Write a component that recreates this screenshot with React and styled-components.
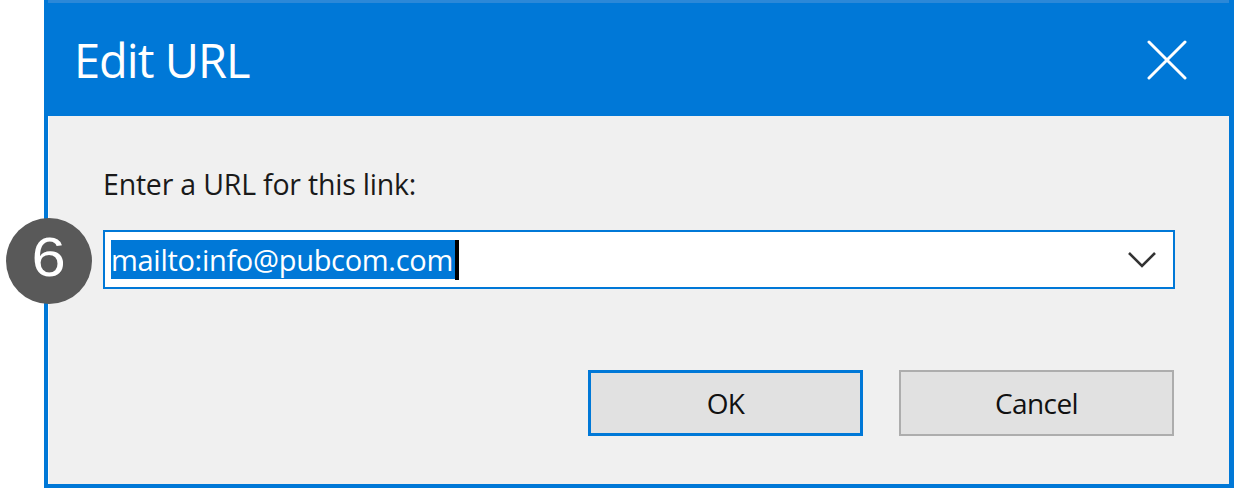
import React from "react"
import styled, { createGlobalStyle } from "styled-components"

const GlobalStyle = createGlobalStyle`
  html, body {
    margin: 0;
    padding: 0;
    background: #ffffff;
    width: 1234px;
    height: 488px;
    overflow: hidden;
  }
`

const blue = "#0078d7"
const uiFont = `"Open Sans", "Noto Sans", "Liberation Sans", sans-serif`

const Page = styled.div`
  position: relative;
  height: 488px;
  padding-left: 44px;
  box-sizing: border-box;
`

const Window = styled.div`
  width: 1190px;
  height: 488px;
  box-sizing: border-box;
  border: 4px solid ${blue};
  border-top: none;
  border-right-width: 5px;
  display: flex;
  flex-direction: column;
  background: #f0f0f0;
`

const TitleBar = styled.div`
  height: 116px;
  flex-shrink: 0;
  background: ${blue};
  border-top: 3px solid #2b88d8;
  box-sizing: border-box;
  display: flex;
  align-items: center;
  justify-content: space-between;
  padding: 0 42px 0 26px;
`

const Title = styled.h1`
  margin: 0;
  font-family: ${uiFont};
  font-weight: 400;
  font-size: 47px;
  letter-spacing: -1px;
  color: #ffffff;
`

const CloseButton = styled.button`
  border: none;
  background: transparent;
  padding: 0;
  width: 40px;
  height: 40px;
  display: flex;
  cursor: pointer;
`

const Body = styled.div`
  flex: 1;
  display: flex;
  flex-direction: column;
  padding: 49px 54px 0 54px;
  border-left: 1px solid #fafafa;
`

const Label = styled.label`
  font-family: ${uiFont};
  font-size: 28.5px;
  letter-spacing: -0.2px;
  line-height: 38px;
  color: #1a1a1a;
`

const Combo = styled.div`
  margin-top: 27px;
  height: 59px;
  box-sizing: border-box;
  border: 2px solid ${blue};
  background: #ffffff;
  display: flex;
  align-items: center;
  padding: 0 16px 0 6px;
`

const Selected = styled.span`
  font-family: ${uiFont};
  font-size: 29px;
  letter-spacing: -0.3px;
  line-height: 39px;
  background: ${blue};
  color: #ffffff;
  padding-right: 2px;
`

const Caret = styled.span`
  width: 4px;
  height: 40px;
  background: #000000;
`

const Spacer = styled.div`
  flex: 1;
`

const Buttons = styled.div`
  margin-top: 81px;
  display: flex;
  justify-content: flex-end;
  gap: 36px;
  padding-right: 1px;
`

const Button = styled.button`
  width: 275px;
  height: 66px;
  box-sizing: border-box;
  background: #e1e1e1;
  border: ${p => (p.$primary ? `3px solid ${blue}` : "2px solid #adadad")};
  font-family: ${uiFont};
  font-size: 28px;
  letter-spacing: -0.6px;
  color: #111111;
  padding: 0;
  cursor: pointer;
`

const StepBadge = styled.div`
  position: absolute;
  left: 6px;
  top: 218px;
  width: 86px;
  height: 86px;
  border-radius: 50%;
  background: #595959;
  color: #ffffff;
  display: flex;
  align-items: center;
  justify-content: center;
  padding-bottom: 8px;
  box-sizing: border-box;
  font-family: "Liberation Sans", Arial, sans-serif;
  font-size: 56px;
  line-height: 1;
`

const Digit = styled.span`
  display: inline-block;
  transform: scaleX(1.1);
`

const CloseIcon = () => (
  <svg width="40" height="40" viewBox="0 0 40 40">
    <path
      d="M2 2 L38 38 M38 2 L2 38"
      stroke="#ffffff"
      strokeWidth="3"
      strokeLinecap="round"
      fill="none"
    />
  </svg>
)

const Chevron = () => (
  <svg width="30" height="18" viewBox="0 0 30 18">
    <path
      d="M2 2 L15 15 L28 2"
      stroke="#333333"
      strokeWidth="2.6"
      fill="none"
    />
  </svg>
)

const App = () => (
  <>
    <GlobalStyle />
    <Page>
      <Window>
        <TitleBar>
          <Title>Edit URL</Title>
          <CloseButton aria-label="Close">
            <CloseIcon />
          </CloseButton>
        </TitleBar>
        <Body>
          <Label>Enter a URL for this link:</Label>
          <Combo>
            <Selected>mailto:info@pubcom.com</Selected>
            <Caret />
            <Spacer />
            <Chevron />
          </Combo>
          <Buttons>
            <Button $primary>OK</Button>
            <Button>Cancel</Button>
          </Buttons>
        </Body>
      </Window>
      <StepBadge>
        <Digit>6</Digit>
      </StepBadge>
    </Page>
  </>
)

export default App
